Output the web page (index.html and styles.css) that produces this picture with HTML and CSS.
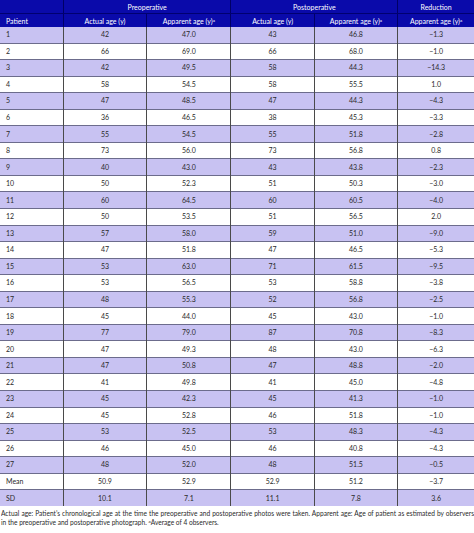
FILE: index.html
```html
<!DOCTYPE html>
<html>
<head>
<meta charset="utf-8">
<link rel="stylesheet" href="styles.css">
</head>
<body>
<table class="data">
<colgroup>
<col class="c-pat"><col class="c-a"><col class="c-b"><col class="c-c"><col class="c-d"><col class="c-e">
</colgroup>
<thead>
<tr class="h1"><th></th><th colspan="2">Preoperative</th><th colspan="2">Postoperative</th><th>Reduction</th></tr>
<tr class="h2"><th class="left">Patient</th><th>Actual age (y)</th><th>Apparent age (y)<sup>a</sup></th><th>Actual age (y)</th><th>Apparent age (y)<sup>a</sup></th><th>Apparent age (y)<sup>a</sup></th></tr>
</thead>
<tbody>
<tr><td>1</td><td>42</td><td>47.0</td><td>43</td><td>46.8</td><td>−1.3</td></tr>
<tr><td>2</td><td>66</td><td>69.0</td><td>66</td><td>68.0</td><td>−1.0</td></tr>
<tr><td>3</td><td>42</td><td>49.5</td><td>58</td><td>44.3</td><td>−14.3</td></tr>
<tr><td>4</td><td>58</td><td>54.5</td><td>58</td><td>55.5</td><td>1.0</td></tr>
<tr><td>5</td><td>47</td><td>48.5</td><td>47</td><td>44.3</td><td>−4.3</td></tr>
<tr><td>6</td><td>36</td><td>46.5</td><td>38</td><td>45.3</td><td>−3.3</td></tr>
<tr><td>7</td><td>55</td><td>54.5</td><td>55</td><td>51.8</td><td>−2.8</td></tr>
<tr><td>8</td><td>73</td><td>56.0</td><td>73</td><td>56.8</td><td>0.8</td></tr>
<tr><td>9</td><td>40</td><td>43.0</td><td>43</td><td>43.8</td><td>−2.3</td></tr>
<tr><td>10</td><td>50</td><td>52.3</td><td>51</td><td>50.3</td><td>−3.0</td></tr>
<tr><td>11</td><td>60</td><td>64.5</td><td>60</td><td>60.5</td><td>−4.0</td></tr>
<tr><td>12</td><td>50</td><td>53.5</td><td>51</td><td>56.5</td><td>2.0</td></tr>
<tr><td>13</td><td>57</td><td>58.0</td><td>59</td><td>51.0</td><td>−9.0</td></tr>
<tr><td>14</td><td>47</td><td>51.8</td><td>47</td><td>46.5</td><td>−5.3</td></tr>
<tr><td>15</td><td>53</td><td>63.0</td><td>71</td><td>61.5</td><td>−9.5</td></tr>
<tr><td>16</td><td>53</td><td>56.5</td><td>53</td><td>58.8</td><td>−3.8</td></tr>
<tr><td>17</td><td>48</td><td>55.3</td><td>52</td><td>56.8</td><td>−2.5</td></tr>
<tr><td>18</td><td>45</td><td>44.0</td><td>45</td><td>43.0</td><td>−1.0</td></tr>
<tr><td>19</td><td>77</td><td>79.0</td><td>87</td><td>70.8</td><td>−8.3</td></tr>
<tr><td>20</td><td>47</td><td>49.3</td><td>48</td><td>43.0</td><td>−6.3</td></tr>
<tr><td>21</td><td>47</td><td>50.8</td><td>47</td><td>48.8</td><td>−2.0</td></tr>
<tr><td>22</td><td>41</td><td>49.8</td><td>41</td><td>45.0</td><td>−4.8</td></tr>
<tr><td>23</td><td>45</td><td>42.3</td><td>45</td><td>41.3</td><td>−1.0</td></tr>
<tr><td>24</td><td>45</td><td>52.8</td><td>46</td><td>51.8</td><td>−1.0</td></tr>
<tr><td>25</td><td>53</td><td>52.5</td><td>53</td><td>48.3</td><td>−4.3</td></tr>
<tr><td>26</td><td>46</td><td>45.0</td><td>46</td><td>40.8</td><td>−4.3</td></tr>
<tr><td>27</td><td>48</td><td>52.0</td><td>48</td><td>51.5</td><td>−0.5</td></tr>
<tr><td>Mean</td><td>50.9</td><td>52.9</td><td>52.9</td><td>51.2</td><td>−3.7</td></tr>
<tr><td>SD</td><td>10.1</td><td>7.1</td><td>11.1</td><td>7.8</td><td>3.6</td></tr>
</tbody>
</table>
<div class="note">
<div class="note-line first">Actual age: Patient’s chronological age at the time the preoperative and postoperative photos were taken. Apparent age: Age of patient as estimated by observers</div>
<div class="note-line">in the preoperative and postoperative photograph. <sup>a</sup>Average of 4 observers.</div>
</div>
</body>
</html>
```

FILE: styles.css
```css
html, body {
  margin: 0;
  padding: 0;
  background: #ffffff;
}
body {
  width: 474px;
  font-family: Lato, "Liberation Sans", sans-serif;
  color: #2a2a2a;
}
.data {
  width: 474px;
  border-collapse: collapse;
  table-layout: fixed;
  font-size: 7px;
}
.c-pat { width: 63.3px; }
.c-a { width: 83.4px; }
.c-b { width: 84.3px; }
.c-c { width: 83.3px; }
.c-d { width: 83.4px; }
.c-e { width: 76.3px; }
thead th {
  background: #0a0aaa;
  color: #ffffff;
  font-weight: normal;
  padding: 0;
  text-align: center;
  border-left: 1px solid #000066;
  border-right: 1px solid #000066;
}
thead th:first-child { border-left: none; }
thead th:last-child { border-right: none; }
.h1 th {
  height: 13px;
  border-bottom: 1px solid #000070;
}
.h2 th {
  height: 13px;
}
.h2 th.left {
  text-align: left;
  padding-left: 6px;
}
sup {
  font-size: 4.5px;
  vertical-align: 2px;
  line-height: 0;
}
tbody td {
  height: 15.55px;
  padding: 0;
  text-align: center;
  border-top: 1px solid #6c6c8c;
  border-left: 1px solid #4a4a4a;
  border-right: 1px solid #4a4a4a;
  line-height: 1;
}
tbody td:first-child {
  text-align: left;
  padding-left: 6px;
  border-left: none;
}
tbody td:last-child { border-right: none; }
tbody tr:nth-child(odd) td { background: #c8c2f2; }
tbody tr:nth-child(even) td { background: #ffffff; }
tbody tr:first-child td { border-top: none; }
.note {
  margin: 3px 0 0 1px;
  width: 473px;
  font-size: 6.6px;
  line-height: 9px;
  color: #2a2a2a;
}
.note-line {
  white-space: nowrap;
}
.note-line.first {
  white-space: normal;
  text-align: justify;
  text-align-last: justify;
  height: 9px;
  overflow: hidden;
}
```
